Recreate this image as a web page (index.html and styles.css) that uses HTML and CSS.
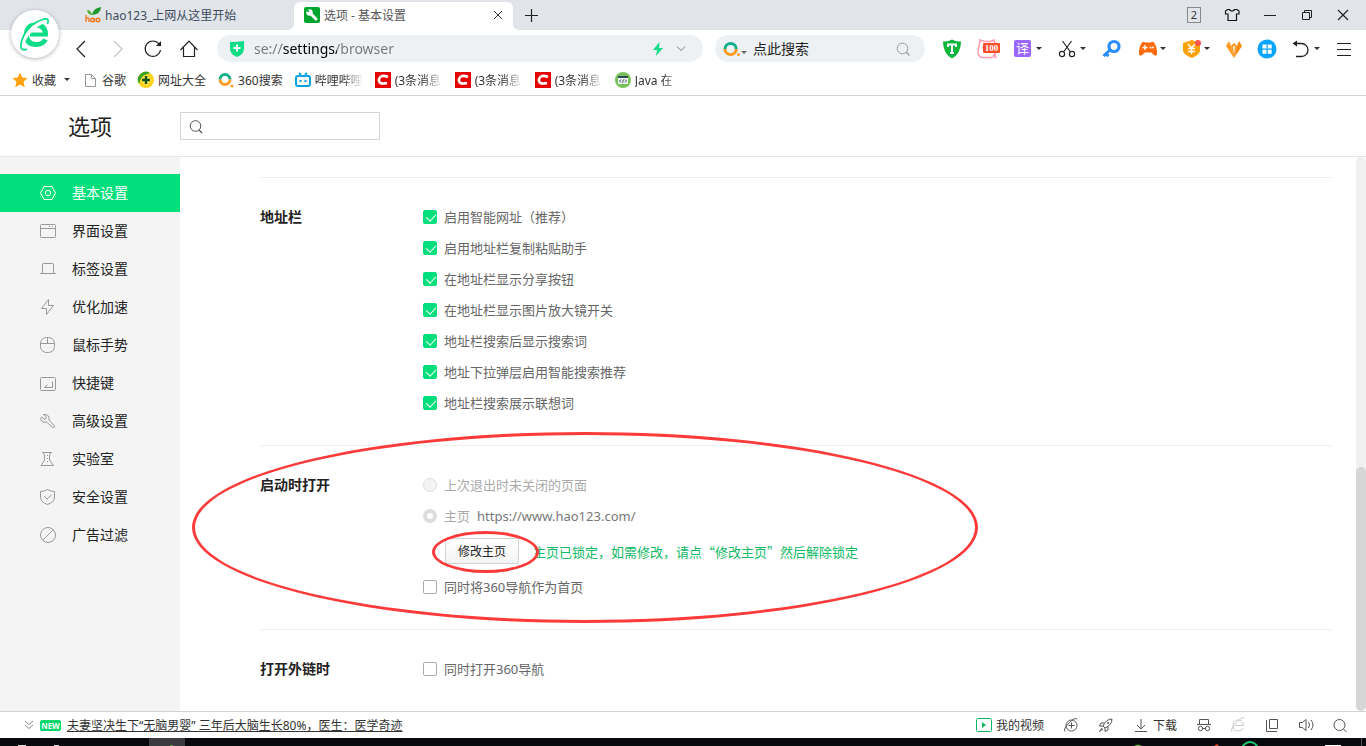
FILE: index.html
```html
<!DOCTYPE html>
<html lang="zh-CN">
<head>
    <meta charset="UTF-8">
    <meta name="viewport" content="width=device-width, initial-scale=1.0">
    <title>选项 - 基本设置</title>
    <link rel="stylesheet" href="styles.css">
</head>
<body>
    <div class="tab-bar">
        <a class="tab" href="#">
            <svg width="16" height="16" viewBox="0 0 16 16"><path d="M2 3q4 0 5 5Q3 8 2 3z" fill="#4caf2f"/><path d="M7 8Q8 1 16 0q0 7-9 8z" fill="#1f9a2c"/><g fill="none" stroke="#f07a22" stroke-width="1.4"><path d="M1 8v7M1 12q3-2 3 0v3"/><circle cx="7.500" cy="13" r="1.800"/><path d="M9.500 11v4"/><circle cx="13" cy="13" r="1.800"/></g></svg>
            <span>hao123_上网从这里开始</span>
        </a>
        <div class="tab active">
            <svg width="16" height="16" viewBox="0 0 16 16"><rect width="16" height="16" rx="2" fill="#00a52e"/><path d="M5 5l7 7" stroke="#fff" stroke-width="3" stroke-linecap="round"/><circle cx="5.500" cy="5.500" r="3.200" fill="#fff"/><path d="M5.500 5.500L2 4l2-2z" fill="#00a52e"/></svg>
            <span>选项 - 基本设置</span>
            <button class="icon-btn tab-close" aria-label="关闭标签"><svg width="10" height="10" viewBox="0 0 10 10"><path d="M1 1l8 8M9 1l-8 8" stroke="#333"/></svg></button>
        </div>
        <button class="icon-btn new-tab" aria-label="新标签"><svg width="14" height="14" viewBox="0 0 14 14"><path d="M7.500 1v13M1 7.500h13" stroke="#222" stroke-width="1.200"/></svg></button>
        <div class="window-btns">
            <button class="tab-count">2</button>
            <button class="icon-btn" aria-label="皮肤"><svg width="14" height="14" viewBox="0 0 14 14"><path d="M4.500 1.500h-2L.5 3v3H3v6.500h8.500V6H14V3l-2-1.500H9.500Q9 3 7 3T4.500 1.500z" fill="none" stroke="#111" stroke-width="1.200"/></svg></button>
            <button class="icon-btn" aria-label="最小化"><svg width="14" height="14" viewBox="0 0 14 14"><path d="M1 7.500h12" stroke="#222"/></svg></button>
            <button class="icon-btn" aria-label="还原"><svg width="12" height="12" viewBox="0 0 12 12"><path d="M1.500 3.500h7v7h-7zM3.500 3V1.500h7v7H9" fill="none" stroke="#222"/></svg></button>
            <button class="icon-btn" aria-label="关闭"><svg width="12" height="12" viewBox="0 0 12 12"><path d="M1 1l10 10M11 1L1 11" stroke="#222" stroke-width="1.200"/></svg></button>
        </div>
    </div>
    <div class="browser-logo">
        <svg width="30" height="36" viewBox="0 0 30 36"><path d="M25.500 19Q25.500 9 16 9T6.500 19q0 9.500 9.500 9.500 7 0 9.500-5" fill="none" stroke="#0cdd86" stroke-width="5"/><path d="M10 18.500h18" stroke="#0cdd86" stroke-width="4"/><path d="M27 4Q11 9 3 25" fill="none" stroke="#fff" stroke-width="4"/><path d="M27.500 8Q30 2 24 3 10 7 3.500 20-1 31 2 33q2 1.500 5 0" fill="none" stroke="#0cdd86" stroke-width="1.800"/></svg>
    </div>

    <div class="toolbar">
        <div class="nav-btns">
            <button class="icon-btn" aria-label="后退"><svg width="20" height="20" viewBox="0 0 20 20"><path d="M14 2l-8 8 8 8" fill="none" stroke="#222" stroke-width="1.200"/></svg></button>
            <button class="icon-btn" aria-label="前进"><svg width="20" height="20" viewBox="0 0 20 20"><path d="M7 2l8 8-8 8" fill="none" stroke="#c4c4c4" stroke-width="1.200"/></svg></button>
            <button class="icon-btn" aria-label="刷新"><svg width="20" height="20" viewBox="0 0 20 20"><path d="M16 5a7.700 7.700 0 1 0 1.500 6" fill="none" stroke="#222" stroke-width="1.200"/><path d="M18 2v5h-5z" fill="#222"/></svg></button>
            <button class="icon-btn" aria-label="主页"><svg width="20" height="20" viewBox="0 0 20 20"><path d="M1.500 11L10 2l8.500 9M4.500 8v9.500h11V8" fill="none" stroke="#222" stroke-width="1.200"/></svg></button>
        </div>
        <div class="pill address">
            <svg width="16" height="17" viewBox="0 0 16 17"><path d="M1 2q7 0 14-1v8q0 5-7 8-7-3-7-8z" fill="#0cdd86"/><path d="M8 4.500v7M4.500 8h7" stroke="#fff" stroke-width="2"/></svg>
            <input type="text" class="address-input" value="se://settings/browser" aria-label="地址">
            <svg width="12" height="14" viewBox="0 0 12 14"><path d="M7.500 0L1 8h4l-1 6 7-8H7z" fill="#0cdd86"/></svg>
            <button class="icon-btn address-drop" aria-label="展开"><svg width="10" height="6" viewBox="0 0 10 6"><path d="M1 0.500l4 4 4-4" fill="none" stroke="#777"/></svg></button>
        </div>
        <div class="pill search">
            <svg width="18" height="16" viewBox="0 0 18 16"><path d="M2 8a5.600 5.600 0 0 1 11.200 0" fill="none" stroke="#14b08a" stroke-width="3"/><path d="M2 8a5.600 5.600 0 0 0 11.200 0" fill="none" stroke="#ff9b21" stroke-width="3"/><circle cx="15.500" cy="13.500" r="1.500" fill="#ff9b21"/></svg>
            <span class="caret"></span>
            <input type="text" class="search-input" placeholder="点此搜索" aria-label="搜索">
            <svg width="14" height="14" viewBox="0 0 14 14"><circle cx="6.500" cy="6.500" r="5.300" fill="none" stroke="#999"/><path d="M10 10l3.500 3.500" stroke="#999" stroke-width="1.200"/></svg>
        </div>
        <div class="extensions">
            <button class="icon-btn" aria-label="广告拦截"><svg width="20" height="20" viewBox="0 0 20 20"><path d="M10 0.500Q14 3 19 2.500q0 12-9 17-9-5-9-17 5 .5 9-2z" fill="#0ab53a"/><path d="M6 8V5.500h8V8M10 6v8M8 14h4" fill="none" stroke="#fff" stroke-width="2"/></svg></button>
            <button class="icon-btn" aria-label="比价"><svg width="24" height="20" viewBox="0 0 24 20"><path d="M9 2.500L4 1 3 7Q0 17 6 18.500h9q4 0 4.500-4M9 2.500h5L18 1l1 3M17 16l2.500 2-1-4M6 8.500h2" fill="none" stroke="#ff9db3" stroke-width="1.600"/><rect x="7" y="4" width="17" height="10" rx="1" fill="#ff4d2a"/><text x="15.500" y="12" text-anchor="middle" class="badge-num">100</text></svg></button>
            <button class="icon-btn drop" aria-label="翻译"><svg width="17" height="17" viewBox="0 0 17 17"><rect width="17" height="17" rx="2" fill="#9a66ff"/><text x="8.500" y="13" text-anchor="middle" class="translate-text">译</text></svg><span class="caret"></span></button>
            <button class="icon-btn drop" aria-label="截图"><svg width="18" height="18" viewBox="0 0 18 18"><g fill="none" stroke="#222" stroke-width="1.200"><path d="M4.500 1l8 11M13.500 1l-8 11"/><circle cx="4" cy="14" r="2.600"/><circle cx="14" cy="14" r="2.600"/></g></svg><span class="caret"></span></button>
            <button class="icon-btn" aria-label="密码"><svg width="20" height="20" viewBox="0 0 20 20"><circle cx="12" cy="7.500" r="5" fill="none" stroke="#2b8cff" stroke-width="3.200"/><path d="M8 11l-6.500 6M3.500 14.500l3 2.500" stroke="#2b8cff" stroke-width="3"/></svg></button>
            <button class="icon-btn drop" aria-label="游戏"><svg width="20" height="16" viewBox="0 0 20 16"><path d="M4 1.500Q6 0 7 1.500h6q1-1.500 3 0 3.500 5 3 12-2 3-5.500-2h-7q-3.500 5-5.500 2-.5-7 3-12z" fill="#ff6a0a"/><path d="M7 4v5M4.500 6.500h5" stroke="#fff" stroke-width="1.400"/><circle cx="12.500" cy="6.500" r="1" fill="#fff"/><circle cx="15" cy="6.500" r="1" fill="#fff"/></svg><span class="caret"></span></button>
            <button class="icon-btn drop" aria-label="购物"><svg width="20" height="20" viewBox="0 0 20 20"><path d="M1 4l9-3 8 3v8q-1 4-8 7-8-3-9-7z" fill="#ffa20a"/><path d="M6 5l3.500 4L13 5M9.500 9v6M6 9.500h7M6 12.500h7" fill="none" stroke="#fff" stroke-width="1.400"/><circle cx="16" cy="4" r="3" fill="#ff5349"/></svg><span class="caret"></span></button>
            <button class="icon-btn" aria-label="钱包"><svg width="18" height="18" viewBox="0 0 18 18"><path d="M1 6l3-5 2 5 3 12z" fill="#ff9a1e"/><path d="M17 6l-3-5-2 5-3 12z" fill="#ff8a10"/><path d="M6 6l3-3 3 3-3 12z" fill="#ff8a10"/><path d="M7.500 7L9 5l1.500 2L9 15z" fill="#ffe0a8"/></svg></button>
            <button class="icon-btn" aria-label="应用"><svg width="20" height="20" viewBox="0 0 20 20"><circle cx="10" cy="10" r="9.500" fill="#05a5ff"/><path d="M5.500 5.500h4v4h-4zM10.700 5.500h4v4h-4zM5.500 10.700h4v4h-4zM10.700 10.700h4v4h-4z" fill="#fff"/></svg></button>
            <button class="icon-btn drop" aria-label="撤销"><svg width="18" height="18" viewBox="0 0 18 18"><path d="M3 3.500h6.500a6.500 6.500 0 0 1 0 13H4" fill="none" stroke="#222" stroke-width="1.300"/><path d="M0.500 3.500L5 0.500v6z" fill="#222"/></svg><span class="caret"></span></button>
            <button class="icon-btn" aria-label="菜单"><svg width="14" height="14" viewBox="0 0 14 14"><path d="M0 1.500h14M0 7.500h14M0 13.500h14" stroke="#222"/></svg></button>
        </div>
    </div>

    <div class="bookmarks">
        <a href="#"><svg width="16" height="16" viewBox="0 0 16 16"><path d="M8 0.500l2.300 5 5.200.6-3.900 3.700 1.100 5.400L8 12.500l-4.700 2.700 1.100-5.400L.5 6.100l5.200-.6z" fill="#ffa10a"/></svg><span>收藏</span><span class="caret"></span></a>
        <a href="#"><svg width="16" height="16" viewBox="0 0 16 16"><path d="M3.500 2.500h6l4 4v8h-10zM9.500 2.500v4h4" fill="none" stroke="#999"/></svg><span>谷歌</span></a>
        <a href="#"><svg width="16" height="16" viewBox="0 0 16 16"><circle cx="8" cy="8" r="8" fill="#ffd21c"/><path d="M1 12A8 8 0 0 1 12 1Q2 4 1 12z" fill="#3ea321"/><circle cx="8" cy="8" r="5" fill="#ffe53d"/><path d="M8 4v8M4 8h8" stroke="#15511b" stroke-width="2.400"/></svg><span>网址大全</span></a>
        <a href="#"><svg width="16" height="16" viewBox="0 0 16 16"><path d="M2 7.500a5 5 0 0 1 10 0" fill="none" stroke="#14b08a" stroke-width="3"/><path d="M2 7.500a5 5 0 0 0 10 0" fill="none" stroke="#ff9b21" stroke-width="3"/><circle cx="14" cy="14" r="1.500" fill="#ff9b21"/></svg><span>360搜索</span></a>
        <a href="#"><svg width="16" height="16" viewBox="0 0 16 16"><rect x="1" y="4" width="14" height="10" rx="2" fill="none" stroke="#06a5df" stroke-width="2"/><path d="M4 1l2 2M12 1l-2 2M5.500 8v2M10.500 8v2" stroke="#06a5df" stroke-width="2"/></svg><span class="fade">哔哩哔哩</span></a>
        <a href="#"><svg width="16" height="16" viewBox="0 0 16 16"><rect width="16" height="16" fill="#e60000"/><path d="M13 5Q6 2 4 7q-1 6 8 4" fill="none" stroke="#fff" stroke-width="2.600"/></svg><span class="fade">(3条消息</span></a>
        <a href="#"><svg width="16" height="16" viewBox="0 0 16 16"><rect width="16" height="16" fill="#e60000"/><path d="M13 5Q6 2 4 7q-1 6 8 4" fill="none" stroke="#fff" stroke-width="2.600"/></svg><span class="fade">(3条消息</span></a>
        <a href="#"><svg width="16" height="16" viewBox="0 0 16 16"><rect width="16" height="16" fill="#e60000"/><path d="M13 5Q6 2 4 7q-1 6 8 4" fill="none" stroke="#fff" stroke-width="2.600"/></svg><span class="fade">(3条消息</span></a>
        <a href="#"><svg width="16" height="16" viewBox="0 0 16 16"><circle cx="8" cy="8" r="8" fill="#78c257"/><rect x="3" y="4" width="10" height="8" rx="1" fill="#eef3f5"/><path d="M3 4h10v2H3z" fill="#324a5e"/><path d="M6 7.500L4.500 9 6 10.500M10 7.500L11.500 9 10 10.500M8.500 7.500l-1 3" fill="none" stroke="#324a5e"/></svg><span class="fade">Java 在</span></a>
    </div>

    <header class="page-header">
        <h1>选项</h1>
        <div class="option-search">
            <svg width="14" height="14" viewBox="0 0 14 14"><circle cx="6.500" cy="7" r="5.300" fill="none" stroke="#555"/><path d="M10 11l3 3" stroke="#555" stroke-width="1.200"/></svg>
            <input type="text" aria-label="搜索选项">
        </div>
    </header>

    <div class="page">
        <nav class="sidebar">
            <a class="current" href="#"><svg width="16" height="16" viewBox="0 0 16 16"><path d="M4 1.500h8L15.500 8 12 14.500H4L.5 8z"/><circle cx="8" cy="8" r="2.700"/></svg>基本设置</a>
            <a href="#"><svg width="16" height="16" viewBox="0 0 16 16"><rect x=".5" y="1.500" width="15" height="13" rx="1"/><path d="M.5 5.500h15M9 3.500h1M12 3.500h1"/></svg>界面设置</a>
            <a href="#"><svg width="16" height="16" viewBox="0 0 16 16"><path d="M0 12.500h16M2.500 12V3.500q0-1 1-1h9q1 0 1 1V12"/></svg>标签设置</a>
            <a href="#"><svg width="16" height="16" viewBox="0 0 16 16"><path d="M8.500.5L1.500 9.500h5v6l7-9h-5z"/></svg>优化加速</a>
            <a href="#"><svg width="16" height="16" viewBox="0 0 16 16"><rect x=".5" y=".5" width="14" height="15" rx="6"/><path d="M.5 6.500h14M7.500.5v6"/></svg>鼠标手势</a>
            <a href="#"><svg width="16" height="16" viewBox="0 0 16 16"><rect x=".5" y="2.500" width="15" height="13" rx="1"/><path d="M12.500 6.500v6h-8l3-3"/></svg>快捷键</a>
            <a href="#"><svg width="16" height="16" viewBox="0 0 16 16"><path d="M3.500 1.500L6.500 4 5 6.500 1.500 4Q-.5 6 2 8.500q2 1.500 4.500.5l6 5.500q2 .5 2-1.500L9 7q1-6-5.500-5.500z"/></svg>高级设置</a>
            <a href="#"><svg width="16" height="16" viewBox="0 0 16 16"><path d="M2 1.500h10M3.500 2q1 1 1 3v4L1 14.500h12.500L9.500 9V5q0-2 1-3"/><path d="M7.500 4v7" stroke-dasharray="1 2"/></svg>实验室</a>
            <a href="#"><svg width="16" height="16" viewBox="0 0 16 16"><path d="M7.500.5q3 2 7 2V8q0 5-7 7.500-7-2.500-7-7.500V2.500q4 0 7-2zM4 7l3 3 4.500-4"/></svg>安全设置</a>
            <a href="#"><svg width="16" height="16" viewBox="0 0 16 16"><circle cx="8" cy="8" r="7.500"/><path d="M3 13L13 3"/></svg>广告过滤</a>
        </nav>

        <main class="settings">
            <section>
                <h2>地址栏</h2>
                <div class="options">
                    <label><input type="checkbox" checked>启用智能网址（推荐）</label>
                    <label><input type="checkbox" checked>启用地址栏复制粘贴助手</label>
                    <label><input type="checkbox" checked>在地址栏显示分享按钮</label>
                    <label><input type="checkbox" checked>在地址栏显示图片放大镜开关</label>
                    <label><input type="checkbox" checked>地址栏搜索后显示搜索词</label>
                    <label><input type="checkbox" checked>地址下拉弹层启用智能搜索推荐</label>
                    <label><input type="checkbox" checked>地址栏搜索展示联想词</label>
                </div>
            </section>
            <section>
                <h2>启动时打开</h2>
                <div class="options">
                    <label class="disabled"><input type="radio" name="startup" disabled>上次退出时未关闭的页面</label>
                    <label class="disabled"><input type="radio" name="startup" checked disabled>主页 <span class="home-url">https://www.hao123.com/</span></label>
                    <div class="home-row">
                        <button class="change-home">修改主页</button>
                        <span class="lock-tip">主页已锁定，如需修改，请点“修改主页”然后解除锁定</span>
                    </div>
                    <label><input type="checkbox">同时将360导航作为首页</label>
                </div>
                <div class="mark mark-section"></div>
                <div class="mark mark-button"></div>
            </section>
            <section>
                <h2>打开外链时</h2>
                <div class="options">
                    <label><input type="checkbox">同时打开360导航</label>
                </div>
            </section>
        </main>
        <div class="scroll-track"><div class="scroll-thumb"></div></div>
    </div>

    <footer class="status-bar">
        <svg width="10" height="10" viewBox="0 0 10 10"><path d="M1 1l4 3.500L9 1M1 5l4 3.500L9 5" fill="none" stroke="#888"/></svg>
        <span class="new-badge">NEW</span>
        <a class="news" href="#">夫妻坚决生下“无脑男婴” 三年后大脑生长80%，医生：医学奇迹</a>
        <div class="status-main">
            <button class="icon-btn"><svg width="16" height="14" viewBox="0 0 16 14"><rect x=".5" y=".5" width="15" height="13" rx="1" fill="none" stroke="#0fb964"/><path d="M6 4l4 3-4 3z" fill="#0fb964"/></svg>我的视频</button>
            <button class="icon-btn" aria-label="加速"><svg width="16" height="16" viewBox="0 0 16 16"><g fill="none" stroke="#555"><circle cx="8.500" cy="8.500" r="5.500"/><path d="M8.500 5.500v6M5.500 8.500h6M2 14.500Q0 12 6 6t8-4"/></g></svg></button>
            <button class="icon-btn" aria-label="火箭"><svg width="16" height="16" viewBox="0 0 16 16"><path d="M5 9Q8 2 14 2q0 6-7 9zM6 6H3L1.500 9H5M10 10v3l-3 1.500V11M4 11l-2.500 3.500L5 12" fill="none" stroke="#555"/><circle cx="10" cy="6" r="1" fill="#555"/></svg></button>
            <button class="icon-btn"><svg width="16" height="16" viewBox="0 0 16 16"><path d="M8 2v10M4 8l4 4 4-4M2 14.500h12" fill="none" stroke="#555"/></svg>下载</button>
        </div>
        <div class="status-tools">
            <button class="icon-btn" aria-label="无痕"><svg width="16" height="16" viewBox="0 0 16 16"><path d="M3.500 7V2.500h9V7M1 7.500h14M6 11.500h4" fill="none" stroke="#555"/><circle cx="4.500" cy="11.500" r="2.200" fill="none" stroke="#555"/><circle cx="11.500" cy="11.500" r="2.200" fill="none" stroke="#555"/></svg></button>
            <button class="icon-btn" aria-label="内核"><svg width="16" height="16" viewBox="0 0 16 16"><path d="M5 8.500h8.500Q13 3 8 3T3 9q0 5 5 5 4 0 5-3M2 15Q0 12 7 5t7-3" fill="none" stroke="#ccc"/></svg></button>
            <button class="icon-btn" aria-label="分屏"><svg width="16" height="16" viewBox="0 0 16 16"><path d="M5.500 2.500h8v9h-8zM2.500 3v11.500H13" fill="none" stroke="#555"/></svg></button>
            <button class="icon-btn" aria-label="声音"><svg width="16" height="16" viewBox="0 0 16 16"><path d="M1.500 5.500h3L8 2.500v11l-3.500-3h-3zM10.500 5q2 3 0 6M13 3q4 5 0 10" fill="none" stroke="#555"/></svg></button>
            <button class="icon-btn" aria-label="查找"><svg width="16" height="16" viewBox="0 0 16 16"><circle cx="7.500" cy="8" r="5.500" fill="none" stroke="#555"/><path d="M11.500 12l3 3" stroke="#555"/></svg></button>
        </div>
    </footer>
    <div class="taskbar">
        <svg width="190" height="8" viewBox="0 0 190 8"><path d="M149 0h36v8h-36z" fill="#3a3b3f"/><path d="M18 7h8v1h-8zM54 7h5v1h-5z" fill="#ddd"/><path d="M170 7h3v1h-3z" fill="#5c9f35"/></svg>
        <svg width="236" height="8" viewBox="0 0 236 8"><path d="M4 8q4-3 8 0z" fill="#6ca23b"/><path d="M84 8l3-2 2 2z" fill="#e0502a"/><circle cx="120" cy="12" r="8" fill="none" stroke="#12cf72" stroke-width="2"/><path d="M195 7h16v1h-16z" fill="#fff"/><path d="M231.500 0v8" stroke="#555"/></svg>
    </div>
</body>
</html>
```

FILE: styles.css
```css
* {
    box-sizing: border-box;
}

body {
    margin: 0;
    height: 100vh;
    display: flex;
    flex-direction: column;
    overflow: hidden;
    position: relative;
    background-color: #fff;
    color: #333;
    font-family: "Noto Sans", "Noto Sans CJK SC", sans-serif;
    font-size: 12px;
}

a {
    color: inherit;
    text-decoration: none;
}

svg {
    display: block;
    flex: none;
    overflow: visible;
}

button,
input {
    font-family: inherit;
    font-size: inherit;
    color: inherit;
}

input[type="text"] {
    min-width: 0;
    padding: 0;
    border: none;
    outline: none;
    background: none;
}

.icon-btn {
    display: flex;
    align-items: center;
    justify-content: center;
    flex: none;
    gap: 4px;
    padding: 0;
    border: none;
    background: none;
    cursor: pointer;
}

.caret {
    flex: none;
    border: 3px solid transparent;
    border-top-color: #333;
    border-bottom: none;
}

/* tabs */
.tab-bar {
    display: flex;
    align-items: flex-end;
    flex: none;
    height: 30px;
    padding-left: 75px;
    background-color: #e1e4e9;
}

.tab {
    position: relative;
    display: flex;
    align-items: center;
    gap: 4px;
    width: 219px;
    height: 28px;
    padding: 0 10px 2px;
    color: #3d4a5c;
}

.tab.active {
    background-color: #fff;
    border-radius: 6px 6px 0 0;
    color: #555;
}

.tab.active::before,
.tab.active::after {
    content: "";
    position: absolute;
    bottom: 0;
    width: 6px;
    height: 6px;
}

.tab.active::before {
    left: -6px;
    background: radial-gradient(circle at 0 0, transparent 6px, #fff 6px);
}

.tab.active::after {
    right: -6px;
    background: radial-gradient(circle at 100% 0, transparent 6px, #fff 6px);
}

.tab-close {
    margin-left: auto;
}

.new-tab,
.window-btns {
    height: 30px;
}

.new-tab {
    margin-left: 11px;
}

.window-btns {
    display: flex;
    align-items: center;
    gap: 24px;
    margin-left: auto;
    padding-right: 17px;
}

.tab-count {
    width: 14px;
    height: 16px;
    padding: 0;
    border: 1px solid #888;
    background: none;
    font-size: 11px;
    line-height: 14px;
}

.browser-logo {
    position: absolute;
    left: 11px;
    top: 10px;
    display: flex;
    align-items: center;
    justify-content: center;
    width: 48px;
    height: 48px;
    border-radius: 50%;
    background-color: #fff;
    box-shadow: 0 1px 4px rgba(0,0,0,0.3);
}

/* toolbar */
.toolbar {
    display: flex;
    align-items: center;
    flex: none;
    height: 37px;
    padding: 0 14px 0 71px;
}

.nav-btns,
.extensions {
    display: flex;
    align-items: center;
    gap: 16px;
}

.nav-btns {
    margin-right: 18px;
}

.extensions {
    margin-left: 17px;
}

.extensions .icon-btn {
    width: 20px;
}

.extensions .drop {
    width: 28px;
    justify-content: space-between;
    gap: 0;
}

.extensions .icon-btn:nth-child(8),
.extensions .icon-btn:nth-child(11) {
    width: 16px;
}

.extensions .icon-btn:nth-child(9) {
    width: 18px;
}

.badge-num {
    fill: #fff;
    font-size: 9px;
    font-weight: bold;
    font-family: "Liberation Serif", serif;
}

.translate-text {
    fill: #fff;
    font-size: 13px;
}

.pill {
    display: flex;
    align-items: center;
    height: 27px;
    border-radius: 14px;
    background-color: #edf1f4;
}

.address {
    flex: 1;
    min-width: 0;
    padding: 0 17px 0 12px;
}

/* the host part of the address is darker than the rest */
.address .address-input {
    flex: 1;
    margin: 0 9px;
    background: linear-gradient(to right, #777 28px, #000 28px, #000 83px, #777 83px);
    -webkit-background-clip: text;
    background-clip: text;
    color: transparent;
    font-size: 14px;
}

.address-drop {
    margin-left: 12px;
}

.search {
    width: 210px;
    margin-left: 12px;
    padding: 0 15px 0 8px;
}

.search .caret {
    margin-top: 8px;
    border-top-color: #666;
}

.search .search-input {
    flex: 1;
    margin-left: 6px;
    font-size: 14px;
}

.search-input::placeholder {
    color: #222;
    opacity: 1;
}

/* bookmarks */
.bookmarks {
    display: flex;
    align-items: center;
    flex: none;
    gap: 12px;
    height: 29px;
    padding: 0 12px 3px;
    border-bottom: 1px solid #d2d2d2;
}

.bookmarks a {
    display: flex;
    align-items: center;
    gap: 4px;
}

.bookmarks span {
    white-space: nowrap;
}

.bookmarks .caret {
    margin-left: 4px;
}

.bookmarks .fade {
    width: 48px;
    -webkit-mask-image: linear-gradient(to right, #000 60%, transparent);
    mask-image: linear-gradient(to right, #000 60%, transparent);
}

/* options page */
.page-header {
    display: flex;
    align-items: center;
    flex: none;
    height: 61px;
    border-bottom: 1px solid #e6e6e6;
}

.page-header h1 {
    width: 180px;
    margin: 0;
    padding: 0 0 2px 68px;
    color: #222;
    font-size: 22px;
    font-weight: normal;
}

.option-search {
    display: flex;
    align-items: center;
    gap: 8px;
    width: 200px;
    height: 28px;
    padding: 0 8px;
    border: 1px solid #d2d2d2;
    border-radius: 1px;
}

.option-search input {
    flex: 1;
}

.page {
    display: flex;
    flex: 1;
    min-height: 0;
}

.sidebar {
    flex: none;
    width: 180px;
    padding-top: 17px;
    background-color: #f4f4f4;
}

.sidebar a {
    display: flex;
    align-items: center;
    gap: 16px;
    height: 38px;
    padding: 0 0 2px 40px;
    color: #222;
    font-size: 14px;
}

.sidebar svg {
    margin-top: 2px;
    fill: none;
    stroke: #999;
}

.sidebar .current {
    background-color: #00df7c;
    color: #fff;
}

.sidebar .current svg {
    stroke: #fff;
}

.settings {
    flex: 1;
    min-width: 0;
    overflow: hidden;
    padding: 20px 24px 0 80px;
}

.settings section {
    position: relative;
    display: flex;
    padding: 23px 0 27px;
    border-top: 1px solid #f0f0f0;
}

.settings h2 {
    flex: none;
    width: 163px;
    margin: 0;
    color: #222;
    font-size: 14px;
    line-height: 31px;
}

.options {
    color: #666;
    font-size: 13px;
}

.options label {
    display: flex;
    align-items: center;
    gap: 7px;
    height: 31px;
}

.options .disabled {
    color: #aaa;
}

.options input {
    appearance: none;
    flex: none;
    position: relative;
    width: 14px;
    height: 14px;
    margin: 0;
    border: 1px solid #aaa;
    border-radius: 2px;
}

.options input[type="checkbox"]:checked {
    border-color: #00df7c;
    background-color: #00df7c;
}

.options input[type="checkbox"]:checked::after {
    content: "";
    position: absolute;
    left: 4px;
    top: 1px;
    width: 5px;
    height: 8px;
    border: solid #fff;
    border-width: 0 1px 1px 0;
    transform: rotate(42deg);
}

.options input[type="radio"] {
    border-color: #ddd;
    border-radius: 50%;
    background-color: #f4f4f4;
}

.options input[type="radio"]:checked {
    border: 4px solid #ddd;
    background-color: #fff;
}

.home-url {
    color: #777;
}

.home-row {
    display: flex;
    align-items: center;
    gap: 14px;
    height: 40px;
    padding-left: 22px;
}

.change-home {
    width: 74px;
    height: 26px;
    padding: 0;
    border: 1px solid #d2d2d2;
    border-radius: 2px;
    background: linear-gradient(#fff, #f4f4f4);
    color: #222;
    font-size: 12px;
    cursor: pointer;
}

.lock-tip {
    color: #0fb964;
    font-family: "Noto Sans CJK SC", sans-serif;
    white-space: nowrap;
}

/* red pen marks lying over the section */
.mark {
    position: absolute;
    border: 3px solid #fc3a3a;
    border-radius: 50%;
    pointer-events: none;
}

.mark-section {
    left: -68px;
    top: -14px;
    width: 786px;
    height: 191px;
}

.mark-button {
    left: 172px;
    top: 85px;
    width: 107px;
    height: 42px;
}

.scroll-track {
    display: flex;
    align-items: flex-end;
    flex: none;
    width: 10px;
    border-radius: 5px;
    background-color: #f0f0f0;
}

.scroll-thumb {
    width: 100%;
    height: 44%;
    border-radius: 5px;
    background-color: #d6d6d6;
}

/* status bar */
.status-bar {
    display: flex;
    align-items: center;
    flex: none;
    height: 27px;
    padding: 0 18px 0 24px;
    border-top: 1px solid #d2d2d2;
}

.new-badge {
    width: 21px;
    height: 11px;
    margin: 0 6px;
    border-radius: 2px;
    background-color: #00d66b;
    color: #fff;
    font-size: 8px;
    font-weight: bold;
    line-height: 11px;
    text-align: center;
}

.news {
    text-decoration: underline;
    white-space: nowrap;
}

.status-main,
.status-tools {
    display: flex;
    align-items: center;
}

.status-main {
    gap: 19px;
    margin-left: auto;
    margin-right: 19px;
}

.status-tools {
    gap: 18px;
}

.taskbar {
    display: flex;
    justify-content: space-between;
    flex: none;
    height: 8px;
    overflow: hidden;
    background-color: #07090d;
}
```
